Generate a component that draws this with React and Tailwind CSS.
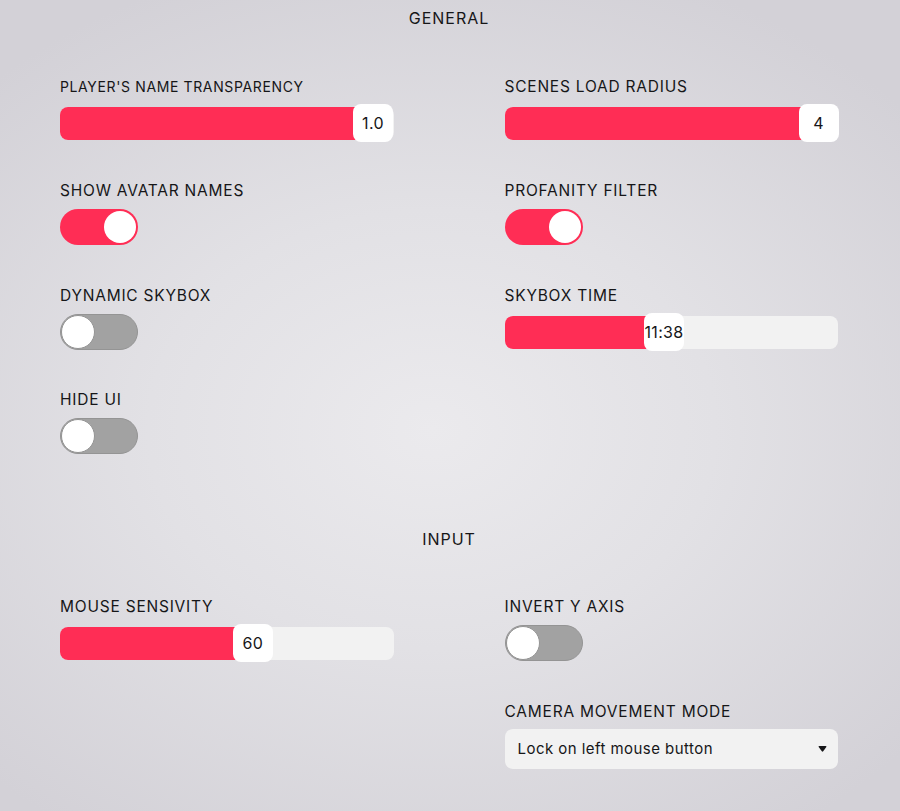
import React from "react";

const font = { fontFamily: "Inter, 'Noto Sans', sans-serif" };

const SectionTitle = ({ children }) => (
  <div className="h-6 text-center text-[16px] leading-6 tracking-[0.06em] text-[#161618]">
    {children}
  </div>
);

const Label = ({ children, small }) => (
  <div
    className={
      small
        ? "h-[21px] text-[14px] leading-[22px] tracking-[0.045em] text-[#161618]"
        : "h-[21px] text-[15.5px] leading-[21px] tracking-[0.05em] text-[#161618]"
    }
  >
    {children}
  </div>
);

const Slider = ({ value, fraction, trackWidth }) => {
  const left = fraction * (trackWidth - 40);
  return (
    <div className="relative h-[38px] w-full">
      <div className="absolute left-0 right-0 top-[3px] h-[33px] overflow-hidden rounded-lg bg-[#f2f2f2]">
        <div className="h-full bg-[#ff2d55]" style={{ width: left + 20 }} />
      </div>
      <div
        className="absolute top-0 flex h-[38px] w-10 items-center justify-center whitespace-nowrap rounded-lg bg-white text-[16px] tracking-[0.02em] text-[#161618]"
        style={{ left }}
      >
        {value}
      </div>
    </div>
  );
};

const Toggle = ({ on }) => (
  <div className="flex h-[38px] items-center">
    <div
      className={
        on
          ? "flex h-[36px] w-[78px] items-center justify-end rounded-full bg-[#ff2d55] pr-[2px]"
          : "flex h-[36px] w-[78px] items-center justify-start rounded-full border border-[#949494] bg-[#a2a2a2]"
      }
    >
      <div
        className={
          on
            ? "h-[32px] w-[32px] rounded-full bg-white"
            : "h-[34px] w-[34px] rounded-full border border-[#949494] bg-white"
        }
      />
    </div>
  </div>
);

const Dropdown = ({ value }) => (
  <div className="flex h-10 w-full items-center justify-between rounded-lg bg-[#f2f2f2] pl-[13px] pr-[11px] text-[15px] tracking-[0.03em] text-[#161618]">
    <span>{value}</span>
    <svg width="9" height="6" viewBox="0 0 9 6">
      <path d="M0.5 0.8 Q0.5 0 1.4 0 H7.6 Q8.5 0 8.5 0.8 L5.2 5.3 Q4.5 6 3.8 5.3 Z" fill="#161618" />
    </svg>
  </div>
);

const Item = ({ label, small, children }) => (
  <div className="flex h-[66px] flex-col gap-[7px]">
    <Label small={small}>{label}</Label>
    {children}
  </div>
);

export default function App() {
  return (
    <div
      className="min-h-[811px] w-full bg-[radial-gradient(ellipse_70%_60%_at_48%_53%,#ebeaed_0%,#e2e1e5_45%,#d3d1d7_100%)] pl-[60px] pr-[62px] pt-[6px]"
      style={font}
    >
      <SectionTitle>GENERAL</SectionTitle>

      <div className="mt-[46px] grid grid-cols-2 gap-x-[111px] gap-y-[38.3px]">
        <Item label="PLAYER'S NAME TRANSPARENCY" small>
          <Slider value="1.0" fraction={1} trackWidth={333} />
        </Item>
        <Item label="SCENES LOAD RADIUS">
          <Slider value="4" fraction={1} trackWidth={334} />
        </Item>
        <Item label="SHOW AVATAR NAMES">
          <Toggle on />
        </Item>
        <Item label="PROFANITY FILTER">
          <Toggle on />
        </Item>
        <Item label="DYNAMIC SKYBOX">
          <Toggle />
        </Item>
        <Item label="SKYBOX TIME">
          <Slider value="11:38" fraction={0.4745} trackWidth={334} />
        </Item>
        <Item label="HIDE UI">
          <Toggle />
        </Item>
        <div />
      </div>

      <div className="mt-[72px]">
        <SectionTitle>INPUT</SectionTitle>
      </div>

      <div className="mt-[45px] grid grid-cols-2 gap-x-[111px] gap-y-[39px]">
        <Item label="MOUSE SENSIVITY">
          <Slider value="60" fraction={0.59} trackWidth={333} />
        </Item>
        <Item label="INVERT Y AXIS">
          <Toggle />
        </Item>
        <div />
        <div className="flex flex-col gap-[7px]">
          <Label>CAMERA MOVEMENT MODE</Label>
          <Dropdown value="Lock on left mouse button" />
        </div>
      </div>
    </div>
  );
}
